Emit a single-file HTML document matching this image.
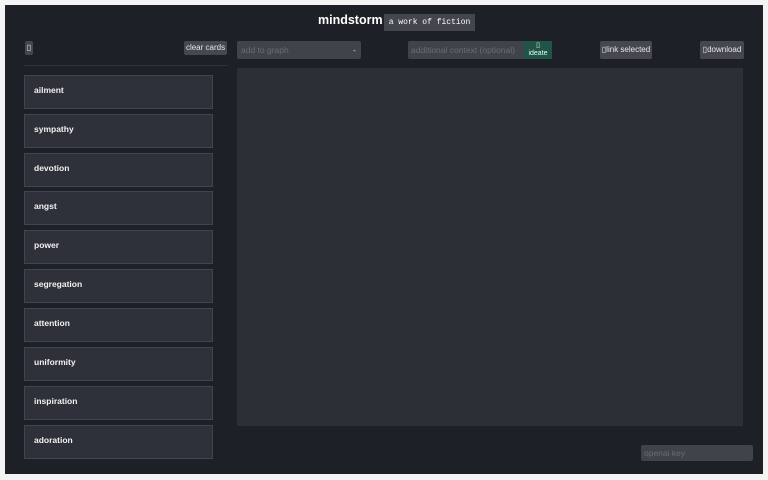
<!DOCTYPE html>
<html><head><style>
body{margin:0;width:768px;height:480px;background:#f4f4f5;font-family:"Liberation Sans",sans-serif;position:relative;overflow:hidden}
.panel{position:absolute;left:5px;top:5px;width:758px;height:469px;background:#1d2027}
.a{position:absolute;white-space:nowrap}
.title{left:318px;top:13px;color:#fff;font-weight:bold;font-size:12.5px}
.sub{left:384px;top:14px;height:17px;width:91px;background:#43464c;color:#fff;font-family:"Liberation Mono",monospace;font-size:8px;line-height:17px;text-align:center}
.btn{background:#454850;color:#e6e6e6;font-size:8px;text-align:center;border-radius:2px}
.card{left:24px;width:187px;height:32px;background:#2e3139;border:1px solid #42454c;color:#f2f2f2;font-weight:bold;font-size:8.5px;box-sizing:content-box}
.card span{position:absolute;left:9px;top:9px}
.inp{background:#40434a;color:#6a6d74;font-size:8.5px;border-radius:2px}
</style></head><body>
<div class="panel"></div>
<div class="a title">mindstorm</div>
<div class="a sub">a work of fiction</div>
<div class="a btn" style="left:25px;top:41px;width:8px;height:14px;line-height:14px">▯</div>
<div class="a btn" style="left:184px;top:41px;width:43px;height:14px;line-height:14px">clear cards</div>
<div class="a" style="left:24px;top:65px;width:204px;height:1px;background:#2e3139"></div>
<div class="a inp" style="left:237px;top:41px;width:124px;height:18px;line-height:18px"><span style="padding-left:4px">add to graph</span><span style="position:absolute;right:5px;color:#ddd">-</span></div>
<div class="a inp" style="left:408px;top:41px;width:118px;height:18px;line-height:18px"><span style="padding-left:3px">additional context (optional)</span></div>
<div class="a" style="left:524px;top:41px;width:28px;height:18px;background:#1f5446;color:#dfe;font-size:7px;text-align:center;line-height:8px;padding-top:1px;box-sizing:border-box">▯<br>ideate</div>
<div class="a btn" style="left:600px;top:41px;width:52px;height:18px;line-height:18px">▯link selected</div>
<div class="a btn" style="left:700px;top:41px;width:44px;height:18px;line-height:18px">▯download</div>
<div class="a" style="left:237px;top:68px;width:506px;height:358px;background:#2c2f36"></div>
<div class="a inp" style="left:641px;top:445px;width:112px;height:16px;line-height:16px"><span style="padding-left:3px">openai key</span></div>
<div class="a card" style="top:75px"><span>ailment</span></div>
<div class="a card" style="top:114px"><span>sympathy</span></div>
<div class="a card" style="top:153px"><span>devotion</span></div>
<div class="a card" style="top:191px"><span>angst</span></div>
<div class="a card" style="top:230px"><span>power</span></div>
<div class="a card" style="top:269px"><span>segregation</span></div>
<div class="a card" style="top:308px"><span>attention</span></div>
<div class="a card" style="top:347px"><span>uniformity</span></div>
<div class="a card" style="top:386px"><span>inspiration</span></div>
<div class="a card" style="top:425px"><span>adoration</span></div>
</body></html>
